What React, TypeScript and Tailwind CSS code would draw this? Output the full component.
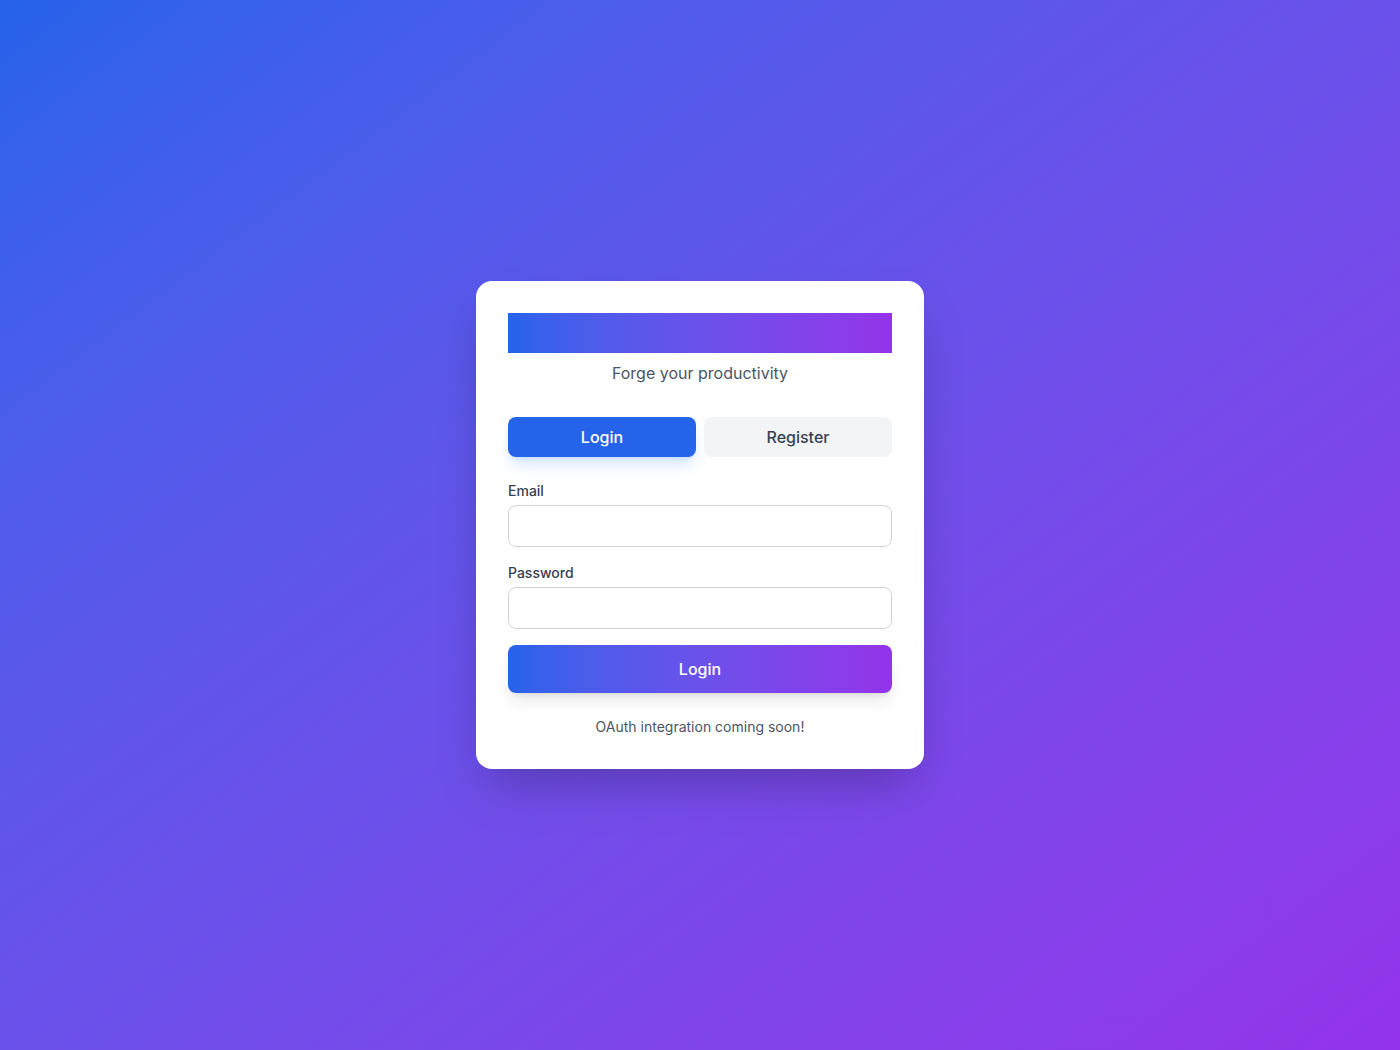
import { useState } from 'react';

export default function App() {
  const [tab, setTab] = useState<'login' | 'register'>('login');
  const [email, setEmail] = useState('');
  const [password, setPassword] = useState('');

  return (
    <div
      className="min-h-screen w-full flex items-center justify-center bg-gradient-to-br from-[#2563eb] to-[#9333ea]"
      style={{ fontFamily: 'Inter, "Open Sans", sans-serif' }}
    >
      <div className="w-[448px] bg-white rounded-2xl shadow-2xl p-8">
        {/* Brand bar */}
        <div className="h-10 w-full bg-gradient-to-r from-[#2563eb] to-[#9333ea]"></div>
        <p className="mt-2 text-center text-base leading-6 text-[#4b5563]">Forge your productivity</p>

        {/* Tabs */}
        <div className="mt-8 grid grid-cols-2 gap-2">
          <button
            type="button"
            onClick={() => setTab('login')}
            className={
              tab === 'login'
                ? 'h-10 rounded-lg bg-[#2563eb] text-white font-medium text-base shadow-lg shadow-blue-500/20'
                : 'h-10 rounded-lg bg-[#f3f4f6] text-[#374151] font-medium text-base'
            }
          >
            Login
          </button>
          <button
            type="button"
            onClick={() => setTab('register')}
            className={
              tab === 'register'
                ? 'h-10 rounded-lg bg-[#2563eb] text-white font-medium text-base shadow-lg shadow-blue-500/20'
                : 'h-10 rounded-lg bg-[#f3f4f6] text-[#374151] font-medium text-base'
            }
          >
            Register
          </button>
        </div>

        {/* Form */}
        <form className="mt-6 flex flex-col gap-4" onSubmit={(e) => e.preventDefault()}>
          <div>
            <label className="block mb-1 text-sm leading-5 font-medium text-[#374151]">Email</label>
            <input
              type="email"
              value={email}
              onChange={(e) => setEmail(e.target.value)}
              className="w-full h-[42px] px-3 rounded-lg border border-[#d1d5db] outline-none"
            />
          </div>
          <div>
            <label className="block mb-1 text-sm leading-5 font-medium text-[#374151]">Password</label>
            <input
              type="password"
              value={password}
              onChange={(e) => setPassword(e.target.value)}
              className="w-full h-[42px] px-3 rounded-lg border border-[#d1d5db] outline-none"
            />
          </div>
          <button
            type="submit"
            className="h-12 rounded-lg bg-gradient-to-r from-[#2563eb] to-[#9333ea] text-white font-medium text-base shadow-lg"
          >
            {tab === 'login' ? 'Login' : 'Register'}
          </button>
        </form>

        <p className="mt-6 text-center text-sm leading-5 text-[#4b5563]">OAuth integration coming soon!</p>
      </div>
    </div>
  );
}
